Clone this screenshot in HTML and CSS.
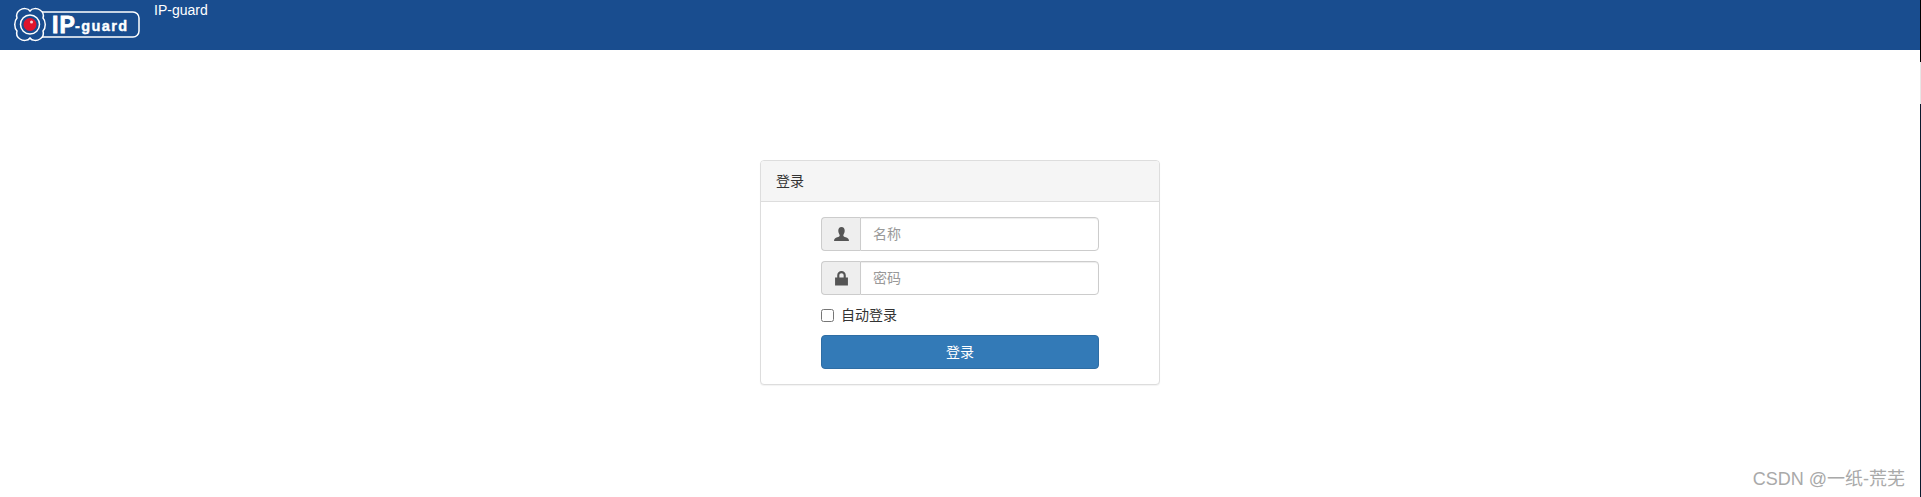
FILE: index.html
```html
<!DOCTYPE html>
<html lang="zh-CN">
<head>
  <meta charset="UTF-8">
  <title>IP-guard</title>
  <link rel="stylesheet" href="styles.css">
</head>
<body>

  <div class="page">
    <div class="main">
      <div class="navbar">
        <svg class="logo" width="130" height="38" viewBox="0 0 130 38">
          <rect x="22" y="7" width="107" height="25" rx="6" class="logoBadge"/>
          <path class="logoOuter" d="M20 6 C22 3 27 3 30 5 C33 7 34 10 33 13 C36 16 36 23 33 26 C34 29 33 32 30 34 C27 36 22 36 20 33 C18 36 13 36 10 34 C7 32 6 29 7 26 C4 23 4 16 7 13 C6 10 7 7 10 5 C13 3 18 3 20 6 Z"/>
          <circle cx="20" cy="19.5" r="9.5" class="logoRing"/>
          <circle cx="20" cy="19.5" r="6.5" class="logoLens"/>
          <circle cx="21.5" cy="17" r="1.5" class="logoGlint"/>
          <text x="42" y="27.5" class="logoIp">IP</text>
          <text x="65" y="25.5" class="logoGuard">-guard</text>
        </svg>
        <a class="brand">IP-guard</a>
      </div>

      <div class="content">
        <div class="panel">
          <div class="panelHeading">登录</div>
          <div class="panelBody">
            <div class="inputGroup">
              <span class="addon">
                <svg width="15" height="15" viewBox="0 0 14 14"><path d="M7 0 C9 0 10 1.5 10 3.5 C10 5.5 9 6.5 8.7 7.6 C8.6 8.6 9.5 9 11 9.6 C12.6 10.2 14 10.8 14 13 L0 13 C0 10.8 1.4 10.2 3 9.6 C4.5 9 5.4 8.6 5.3 7.6 C5 6.5 4 5.5 4 3.5 C4 1.5 5 0 7 0 Z"/></svg>
              </span>
              <input class="formControl" type="text" placeholder="名称">
            </div>
            <div class="inputGroup">
              <span class="addon">
                <svg width="15" height="15" viewBox="0 0 14 14"><path d="M1 6 L3 6 L3 4 C3 1.5 4.8 0 7 0 C9.2 0 11 1.5 11 4 L11 6 L13 6 L13 13.5 L1 13.5 Z M5 6 L9 6 L9 4 C9 2.8 8.2 2 7 2 C5.8 2 5 2.8 5 4 Z" fill-rule="evenodd"/></svg>
              </span>
              <input class="formControl" type="password" placeholder="密码">
            </div>
            <label class="checkRow"><input type="checkbox"> 自动登录</label>
            <button class="btnPrimary">登录</button>
          </div>
        </div>
      </div>
    </div>

    <div class="edge">
      <div class="edgeTop"></div>
      <div class="edgeMid"></div>
      <div class="edgeBottom"></div>
    </div>
  </div>

  <div class="watermark">CSDN @一纸-荒芜</div>

</body>
</html>
```
FILE: styles.css
```css
* {
  box-sizing: border-box;
}

html, body {
  height: 100%;
  margin: 0;
  overflow: hidden;
}

body {
  font-family: "Liberation Sans", "Noto Sans CJK SC", sans-serif;
  font-size: 14px;
  line-height: 20px;
  color: #333;
  background-color: #fff;
}

.page {
  display: flex;
  height: 100%;
}

.main {
  flex: 1;
}

.navbar {
  display: flex;
  align-items: flex-start;
  height: 50px;
  padding-left: 10px;
  background-color: #194d8f;
}

.logo {
  margin-top: 5px;
  flex-shrink: 0;
}

.logoBadge {
  fill: none;
  stroke: #fff;
  stroke-width: 1.5;
}

.logoOuter {
  fill: #194d8f;
  stroke: #fff;
  stroke-width: 1.5;
}

.logoRing {
  fill: #194d8f;
  stroke: #fff;
  stroke-width: 1.5;
}

.logoLens {
  fill: #e0142c;
}

.logoGlint {
  fill: #fff;
  opacity: 0.8;
}

.logoIp {
  font-family: "Liberation Sans", sans-serif;
  font-weight: bold;
  font-size: 23px;
  letter-spacing: 1px;
  fill: #fff;
  stroke: #fff;
  stroke-width: 0.8;
}

.logoGuard {
  font-family: "Liberation Sans", sans-serif;
  font-weight: bold;
  font-size: 14.5px;
  letter-spacing: 1.4px;
  fill: #fff;
  stroke: #fff;
  stroke-width: 0.4;
}

.brand {
  margin-left: 14px;
  color: #fff;
}

.content {
  display: flex;
  justify-content: center;
  padding-top: 110px;
}

.panel {
  width: 400px;
  background-color: #fff;
  border: 1px solid #ddd;
  border-radius: 4px;
  box-shadow: 0 1px 1px rgba(0, 0, 0, 0.05);
}

.panelHeading {
  padding: 10px 15px;
  height: 41px;
  background-color: #f5f5f5;
  border-bottom: 1px solid #ddd;
  border-radius: 3px 3px 0 0;
}

.panelBody {
  padding: 15px 60px;
}

.inputGroup {
  display: flex;
  height: 34px;
  margin-bottom: 10px;
}

.addon {
  display: flex;
  align-items: center;
  justify-content: center;
  width: 39px;
  background-color: #eee;
  border: 1px solid #ccc;
  border-right: 0;
  border-radius: 4px 0 0 4px;
}

.addon svg {
  fill: #555;
}

.formControl {
  flex: 1;
  min-width: 0;
  padding: 6px 12px;
  font: inherit;
  color: #555;
  border: 1px solid #ccc;
  border-radius: 0 4px 4px 0;
  box-shadow: inset 0 1px 1px rgba(0, 0, 0, 0.075);
}

.formControl::placeholder {
  color: #999;
}

.checkRow {
  display: flex;
  align-items: center;
  gap: 7px;
  height: 20px;
  margin-top: 10px;
  margin-bottom: 10px;
}

.checkRow input {
  width: 13px;
  height: 13px;
  margin: 0;
}

.btnPrimary {
  display: block;
  width: 100%;
  height: 34px;
  font: inherit;
  color: #fff;
  background-color: #337ab7;
  border: 1px solid #2e6da4;
  border-radius: 4px;
}

.edge {
  display: flex;
  flex-direction: column;
  width: 1px;
}

.edgeTop {
  height: 62px;
  background-color: #000;
}

.edgeMid {
  height: 42px;
  background-color: #e6e6e6;
}

.edgeBottom {
  flex: 1;
  background-color: #0a1a2e;
}

.watermark {
  position: absolute;
  right: 16px;
  bottom: 7px;
  font-size: 18px;
  line-height: 22px;
  color: #a9a9a9;
}
```
